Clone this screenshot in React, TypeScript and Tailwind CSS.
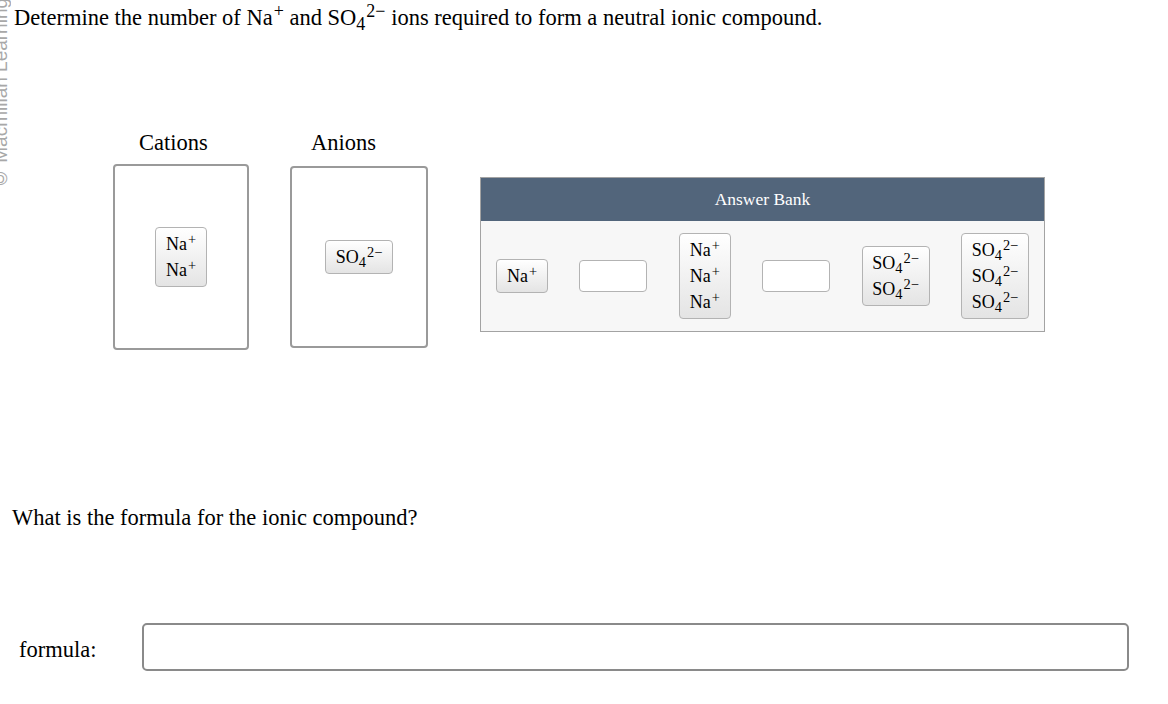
import React from "react";

function Na() {
  return (
    <span>
      Na<sup className="ml-[1px] text-[0.8em] top-[-0.45em]">+</sup>
    </span>
  );
}

function SO4() {
  return (
    <span>
      SO<sub className="text-[0.8em] bottom-[-0.3em]">4</sub>
      <sup className="ml-[1px] text-[0.8em] top-[-0.45em]">2−</sup>
    </span>
  );
}

function Tile({ kind, n }: { kind: "na" | "so"; n: number }) {
  const lines = Array.from({ length: n });
  return (
    <div
      className={`flex flex-col items-center rounded-[4px] border border-[#b3b3b3] bg-gradient-to-b from-white to-[#e4e4e4] py-[3px] text-[18px] leading-[26px] shadow-[inset_0_1px_0_#fff] ${
        kind === "na" ? "w-[52px]" : "w-[68px]"
      }`}
    >
      {lines.map((_, i) => (
        <div key={i}>{kind === "na" ? <Na /> : <SO4 />}</div>
      ))}
    </div>
  );
}

function Slot() {
  return <div className="h-[32px] w-[68px] rounded-[4px] border border-[#b3b3b3] bg-white" />;
}

export default function App() {
  return (
    <div className="relative h-[704px] w-[1168px] overflow-hidden bg-white font-['Liberation_Serif','Times_New_Roman',serif] text-black">
      <div className="absolute left-[-9px] top-[-2px] h-[200px] rotate-180 text-right font-['Liberation_Sans',Arial,sans-serif] text-[19px] leading-[19px] text-[#a8a8a8] [writing-mode:vertical-rl]">
        © Macmillan Learning
      </div>

      <p className="pl-[14px] pt-[3px] text-[22.5px] leading-[30px]">
        Determine the number of <Na /> and <SO4 /> ions required to form a neutral ionic compound.
      </p>

      <div className="mt-[97px] flex items-start">
        <div className="ml-[113px] flex w-[136px] flex-col">
          <div className="pl-[26px] text-[22.5px] leading-[26px]">Cations</div>
          <div className="mt-[8px] flex h-[186px] items-center justify-center rounded-[4px] border-2 border-[#9a9a9a]">
            <Tile kind="na" n={2} />
          </div>
        </div>
        <div className="ml-[41px] flex w-[138px] flex-col">
          <div className="pl-[21px] text-[22.5px] leading-[26px]">Anions</div>
          <div className="mt-[10px] flex h-[182px] items-center justify-center rounded-[4px] border-2 border-[#9a9a9a]">
            <Tile kind="so" n={1} />
          </div>
        </div>
        <div className="ml-[52px] mt-[47px] flex w-[565px] flex-col border border-[#a3a3a3]">
          <div className="flex h-[43px] items-center justify-center bg-[#52657b] text-[17.5px] text-white">
            Answer Bank
          </div>
          <div className="flex h-[110px] items-center justify-between bg-[#f7f7f7] px-[15px]">
            <Tile kind="na" n={1} />
            <Slot />
            <Tile kind="na" n={3} />
            <Slot />
            <Tile kind="so" n={2} />
            <Tile kind="so" n={3} />
          </div>
        </div>
      </div>

      <p className="mt-[155px] pl-[12px] text-[22.5px] leading-[26px]">What is the formula for the ionic compound?</p>

      <div className="mt-[92px] flex items-start">
        <div className="w-[142px] pl-[19px] pt-[14px] text-[22.5px] leading-[26px]">formula:</div>
        <div className="h-[48px] w-[987px] rounded-[5px] border-2 border-[#8a8a8a] bg-white" />
      </div>
    </div>
  );
}
